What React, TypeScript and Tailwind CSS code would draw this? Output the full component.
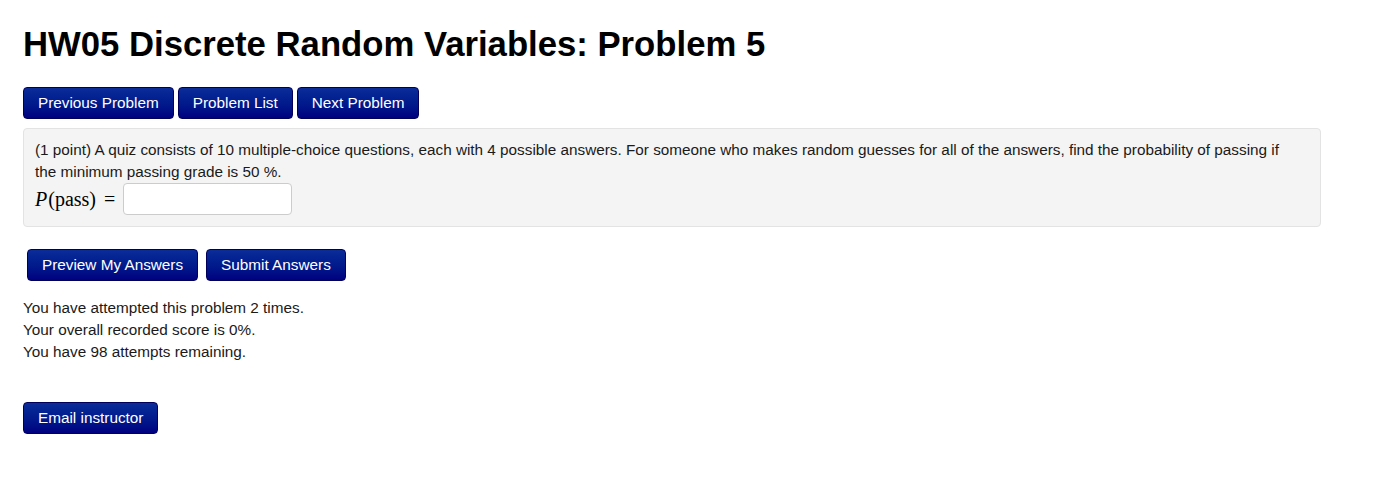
import React from "react";

const btn =
  "h-8 px-[14px] rounded-[4px] border border-[#00005a] bg-gradient-to-b from-[#0b2c99] to-[#000080] text-white text-[15.3px] leading-[20px] whitespace-nowrap [font-family:'Liberation_Sans',Arial,sans-serif]";

export default function App() {
  return (
    <div className="min-h-[490px] bg-white pl-[23px] pr-[77px] pt-[24px] text-[#1a1a1a] [font-family:'Liberation_Sans',Arial,sans-serif]">
      <h1 className="text-[34.7px] font-bold leading-[40px] text-black">
        HW05 Discrete Random Variables: Problem 5
      </h1>
      <div className="mt-[23px] flex gap-[4px]">
        <button className={btn}>Previous Problem</button>
        <button className={btn}>Problem List</button>
        <button className={btn}>Next Problem</button>
      </div>
      <div className="mt-[9px] rounded-[4px] border border-[#e3e3e3] bg-[#f4f4f4] pl-[11px] pr-[30px] pt-[10px] pb-[11px] text-[15.3px] leading-[22px] text-[#1a1a1a]">
        <p>
          (1 point) A quiz consists of 10 multiple-choice questions, each with 4 possible answers. For someone who makes
          random guesses for all of the answers, find the probability of passing if the minimum passing grade is 50 %.
        </p>
        <div className="flex items-center gap-[8px]">
          <span className="text-[20px] leading-[32px] [font-family:'Liberation_Serif',serif] text-black">
            <i>P</i>
            <span className="ml-[1px]">(pass)</span>
            <span className="ml-[8px]">=</span>
          </span>
          <input
            type="text"
            className="h-8 w-[169px] rounded-[4px] border border-[#cccccc] bg-white"
          />
        </div>
      </div>
      <div className="mt-[22px] ml-[4px] flex gap-[8px]">
        <button className={btn}>Preview My Answers</button>
        <button className={btn}>Submit Answers</button>
      </div>
      <div className="mt-[16px] text-[15.3px] leading-[22px] text-[#1a1a1a]">
        <div>You have attempted this problem 2 times.</div>
        <div>Your overall recorded score is 0%.</div>
        <div>You have 98 attempts remaining.</div>
      </div>
      <div className="mt-[39px]">
        <button className={btn}>Email instructor</button>
      </div>
    </div>
  );
}
